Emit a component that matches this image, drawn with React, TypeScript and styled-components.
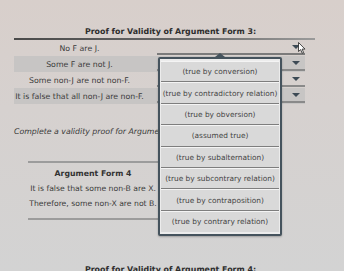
import React from "react";
import styled, { createGlobalStyle } from "styled-components";

const Global = createGlobalStyle`
  html, body { margin: 0; padding: 0; }
  body {
    width: 344px;
    height: 271px;
    overflow: hidden;
    background: linear-gradient(180deg, #d8cfcb 0%, #d6d1cf 40%, #d3d3d3 100%);
    font-family: "DejaVu Sans", Verdana, sans-serif;
    color: #3a3a3a;
  }
`;

const Page = styled.div`
  position: relative;
  width: 344px;
  height: 271px;
  padding: 27px 0 0 14px;
  box-sizing: border-box;
`;

const Title = styled.div`
  width: 301px;
  padding-left: 12px;
  box-sizing: border-box;
  text-align: center;
  font-weight: bold;
  font-size: 7.9px;
  line-height: 10px;
  color: #2e2e2e;
  white-space: nowrap;
`;

const TitleRule = styled.div`
  width: 301px;
  height: 2px;
  margin-top: 1px;
  background: linear-gradient(90deg, #4a4a4a 0%, #6a6a6a 60%, #9a9a9a 100%);
`;

const ProofTable = styled.div`
  display: flex;
  flex-direction: column;
  width: 291px;
`;

const Row = styled.div<{ $shaded: boolean }>`
  display: grid;
  grid-template-columns: 141px 148px;
  column-gap: 2px;
  height: 16px;
  align-items: center;
  background: ${(p) => (p.$shaded ? "#c7c5c4" : "transparent")};
`;

const Statement = styled.div`
  text-align: center;
  padding-right: 10px;
  font-size: 7.8px;
  color: #3a3a3a;
  white-space: nowrap;
`;

const SelectCell = styled.div<{ $first: boolean }>`
  height: 11px;
  border-bottom: 2px solid ${(p) => (p.$first ? "#7b7b7b" : "#8a8a8a")};
  display: flex;
  justify-content: flex-end;
  align-items: flex-start;
  padding-right: 5px;
`;

const Arrow = styled.div`
  width: 0;
  height: 0;
  border-left: 4px solid transparent;
  border-right: 4px solid transparent;
  border-top: 4px solid #3d4a55;
  margin-top: 3px;
`;

const Instruction = styled.div`
  margin-top: 23px;
  font-size: 7.8px;
  line-height: 10px;
  font-style: italic;
  color: #3a3a3a;
  white-space: nowrap;
`;

const ArgBox = styled.div`
  margin: 24px 0 0 14px;
  width: 130px;
  display: flex;
  flex-direction: column;
  align-items: center;
`;

const Rule = styled.div`
  align-self: stretch;
  height: 2px;
  background: #9c9c9c;
`;

const ArgTitle = styled.div`
  margin: 6px 0 2px;
  font-weight: bold;
  font-size: 7.8px;
  line-height: 10px;
  color: #333;
  white-space: nowrap;
`;

const ArgLine = styled.div`
  font-size: 7.7px;
  line-height: 15px;
  white-space: nowrap;
  color: #3a3a3a;
`;

const ArgEnd = styled(Rule)`
  margin-top: 7px;
`;

const BottomTitle = styled(Title)`
  margin-top: 45px;
`;

const Popup = styled.div`
  position: absolute;
  left: 158px;
  top: 57px;
  width: 124px;
  box-sizing: border-box;
  border: 2px solid #45535d;
  border-radius: 2px;
  background: #ececec;
  padding: 2px 1px;
  box-shadow: 0 1px 2px rgba(0, 0, 0, 0.25);
`;

const Notch = styled.div`
  position: absolute;
  top: -6px;
  left: 55px;
  width: 0;
  height: 0;
  border-left: 5px solid transparent;
  border-right: 5px solid transparent;
  border-bottom: 4px solid #45535d;
`;

const Item = styled.div<{ $last: boolean }>`
  height: 19.4px;
  display: flex;
  align-items: center;
  justify-content: center;
  background: #d9d9d9;
  border-top: 1px solid #f4f4f4;
  border-bottom: ${(p) => (p.$last ? "1px solid #d9d9d9" : "1px solid #7e7e7e")};
  font-size: 7.4px;
  color: #444;
  white-space: nowrap;
`;

const Cursor = styled.svg`
  position: absolute;
  left: 298px;
  top: 42px;
`;

const statements = [
  "No F are J.",
  "Some F are not J.",
  "Some non-J are not non-F.",
  "It is false that all non-J are non-F.",
];

const options = [
  "(true by conversion)",
  "(true by contradictory relation)",
  "(true by obversion)",
  "(assumed true)",
  "(true by subalternation)",
  "(true by subcontrary relation)",
  "(true by contraposition)",
  "(true by contrary relation)",
];

export default function App() {
  return (
    <>
      <Global />
      <Page>
        <Title>Proof for Validity of Argument Form 3:</Title>
        <TitleRule />
        <ProofTable>
          {statements.map((s, i) => (
            <Row key={s} $shaded={i % 2 === 1}>
              <Statement>{s}</Statement>
              <SelectCell $first={i === 0}>
                <Arrow />
              </SelectCell>
            </Row>
          ))}
        </ProofTable>
        <Instruction>Complete a validity proof for Argument Form 4.</Instruction>
        <ArgBox>
          <Rule />
          <ArgTitle>Argument Form 4</ArgTitle>
          <ArgLine>It is false that some non-B are X.</ArgLine>
          <ArgLine>Therefore, some non-X are not B.</ArgLine>
          <ArgEnd />
        </ArgBox>
        <BottomTitle>Proof for Validity of Argument Form 4:</BottomTitle>

        <Popup>
          <Notch />
          {options.map((o, i) => (
            <Item key={o} $last={i === options.length - 1}>
              {o}
            </Item>
          ))}
        </Popup>
        <Cursor width="8" height="12" viewBox="0 0 8 12">
          <path
            d="M0.5 0.5 L0.5 9.5 L2.6 7.6 L4.2 11.2 L5.6 10.6 L4.1 7.1 L7 7.1 Z"
            fill="#fff"
            stroke="#222"
            strokeWidth="0.8"
            strokeLinejoin="round"
          />
        </Cursor>
      </Page>
    </>
  );
}
